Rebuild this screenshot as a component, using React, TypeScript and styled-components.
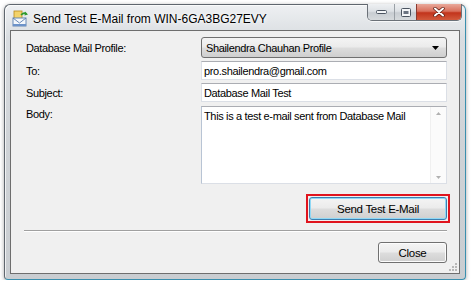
import styled, { createGlobalStyle } from "styled-components";

const GlobalStyle = createGlobalStyle`
  body {
    margin: 0;
    background: #ffffff;
    font-family: "Liberation Sans", Arial, sans-serif;
  }
`;

const Window = styled.div`
  box-sizing: border-box;
  width: 462px;
  height: 276px;
  margin: 4px 0 0 4px;
  display: flex;
  flex-direction: column;
  padding: 0 5px 5px 5px;

  border: 1px solid #5f666e;
  border-right-color: #3a8fae;
  border-bottom-color: #3a8fae;
  border-radius: 6px 6px 4px 4px;
  background: linear-gradient(
    180deg,
    #eef0f2 0%,
    #d9dde1 12%,
    #cfd3d7 50%,
    #c9cdd1 100%
  );
  box-shadow: 0 1px 4px rgba(0, 0, 0, 0.35),
    inset 1px 1px 0 rgba(255, 255, 255, 0.7);
`;

const TitleBar = styled.div`
  height: 25px;
  display: flex;
  flex-direction: row;
  align-items: flex-start;
  flex-shrink: 0;
`;

const TitleIcon = styled.div`
  width: 17px;
  height: 17px;
  margin: 5px 4px 0 2px;
`;

const TitleText = styled.div`
  margin-top: 7px;
  font-size: 12px;
  color: #000;
  text-shadow: 0 0 6px #ffffff, 0 0 3px #ffffff;
  white-space: nowrap;
`;

const Spacer = styled.div`
  flex: 1;
`;

const CaptionButtons = styled.div`
  display: flex;
  flex-direction: row;
  margin-top: -1px;
  margin-right: -2px;
  border: 1px solid #6b7178;
  border-top: none;
  border-radius: 0 0 5px 5px;
  overflow: hidden;
  box-shadow: 0 1px 0 rgba(255, 255, 255, 0.7);
`;

const CaptionButton = styled.div<{ $width: number; $close?: boolean }>`
  width: ${(p) => p.$width}px;
  height: 16px;
  display: flex;
  align-items: center;
  justify-content: center;
  border-left: ${(p) => (p.$close ? "1px solid #8a3a30" : "1px solid #9aa0a6")};
  background: ${(p) =>
    p.$close
      ? "linear-gradient(180deg, #e9a99b 0%, #d9705c 45%, #c2341c 55%, #d25a3c 100%)"
      : "linear-gradient(180deg, #eef0f2 0%, #dde1e5 45%, #c8cdd2 55%, #d6dadd 100%)"};
  &:first-child {
    border-left: none;
  }
`;

const Client = styled.div`
  flex: 1;
  position: relative;
  display: flex;
  flex-direction: column;
  border: 1px solid #6e6e6e;
  background: #f0f0f0;
  padding: 6px 12px 0 15px;
  font-size: 11px;
  letter-spacing: -0.35px;
  color: #000;
`;

const Form = styled.div`
  display: grid;
  grid-template-columns: 175px 1fr;
  row-gap: 3px;
  align-items: center;
`;

const Label = styled.div<{ $top?: boolean }>`
  align-self: ${(p) => (p.$top ? "start" : "center")};
  padding-top: ${(p) => (p.$top ? "3px" : "0")};
`;

const Combo = styled.div`
  box-sizing: border-box;
  height: 21px;
  display: flex;
  align-items: center;
  justify-content: space-between;
  padding: 0 7px 0 4px;
  border: 1px solid #707070;
  border-radius: 3px;
  background: linear-gradient(
    180deg,
    #f4f4f4 0%,
    #ebebeb 48%,
    #dddddd 52%,
    #cfcfcf 100%
  );
`;

const TextBox = styled.div`
  box-sizing: border-box;
  height: 19px;
  display: flex;
  align-items: center;
  padding: 0 2px;
  border: 1px solid #dbdfe6;
  border-top-color: #abadb3;
  background: #ffffff;
`;

const BodyBox = styled.div`
  box-sizing: border-box;
  height: 78px;
  display: flex;
  flex-direction: row;
  margin-top: 1px;
  border: 1px solid #dbdfe6;
  border-top-color: #abadb3;
  border-left-color: #b8c4d4;
  background: #ffffff;
`;

const BodyText = styled.div`
  flex: 1;
  padding: 3px 2px;
`;

const ScrollBar = styled.div`
  width: 15px;
  display: flex;
  flex-direction: column;
  justify-content: space-between;
  align-items: center;
  padding: 5px 0 4px;
  background: #fbfbfb;
  border-left: 1px solid #f0f0f0;
`;

const ButtonRow = styled.div`
  display: flex;
  justify-content: flex-end;
  margin-top: 10px;
  margin-right: -3px;
`;

const Highlight = styled.div`
  border: 2px solid #e0141e;
  padding: 1px;
`;

const Button = styled.div<{ $width: number; $default?: boolean }>`
  box-sizing: border-box;
  width: ${(p) => p.$width}px;
  height: ${(p) => (p.$default ? 23 : 21)}px;
  display: flex;
  align-items: center;
  justify-content: center;
  border: 1px solid ${(p) => (p.$default ? "#3c7fb1" : "#707070")};
  border-radius: 3px;
  background: linear-gradient(
    180deg,
    #f4f4f4 0%,
    #ebebeb 48%,
    #dddddd 52%,
    #cfcfcf 100%
  );
  box-shadow: ${(p) =>
    p.$default ? "inset 0 0 0 1px #8fd8f5" : "inset 0 0 0 1px #fcfcfc"};
  font-size: 11.5px;
  letter-spacing: -0.3px;
`;

const Separator = styled.div`
  height: 1px;
  margin: 7px 0 0 -2px;
  background: #a0a0a0;
  border-bottom: 1px solid #ffffff;
`;

const FooterRow = styled.div`
  display: flex;
  justify-content: flex-end;
  margin-top: 10px;
`;

const Grip = styled.svg`
  position: absolute;
  right: 1px;
  bottom: 1px;
`;

function MailIcon() {
  return (
    <svg width="17" height="17" viewBox="0 0 17 17">
      <rect x="2" y="1" width="8" height="9" fill="#f3d36b" stroke="#b88a1c" strokeWidth="0.8" />
      <rect x="1" y="8" width="13" height="8" fill="#f4f7fb" stroke="#5a7fb0" strokeWidth="0.9" />
      <path d="M1 8 L7.5 13 L14 8" fill="none" stroke="#5a7fb0" strokeWidth="0.9" />
      <rect x="1" y="14" width="13" height="2" fill="#6d93c9" />
      <path d="M9 5 Q12 2 14.5 4" fill="none" stroke="#2f9a2f" strokeWidth="1.6" />
      <path d="M13 1.5 L16 4.5 L12.5 5.5 Z" fill="#2f9a2f" />
    </svg>
  );
}

export default function App() {
  return (
    <>
      <GlobalStyle />
      <Window>
        <TitleBar>
          <TitleIcon>
            <MailIcon />
          </TitleIcon>
          <TitleText>Send Test E-Mail from WIN-6GA3BG27EVY</TitleText>
          <Spacer />
          <CaptionButtons>
            <CaptionButton $width={26}>
              <svg width="11" height="6" viewBox="0 0 11 6">
                <rect x="0.5" y="1.5" width="10" height="3" rx="1" fill="#f4f6f8" stroke="#4b5460" />
              </svg>
            </CaptionButton>
            <CaptionButton $width={21}>
              <svg width="10" height="9" viewBox="0 0 10 9">
                <rect x="0.5" y="0.5" width="9" height="8" rx="1" fill="#f4f6f8" stroke="#4b5460" />
                <rect x="2.5" y="3" width="5" height="3" fill="#6a7380" />
              </svg>
            </CaptionButton>
            <CaptionButton $width={44} $close>
              <svg width="12" height="10" viewBox="0 0 12 10">
                <path d="M2 1.5 L10 8.5 M10 1.5 L2 8.5" stroke="#5a1a10" strokeWidth="3.4" strokeLinecap="round" />
                <path d="M2 1.5 L10 8.5 M10 1.5 L2 8.5" stroke="#ffffff" strokeWidth="2" strokeLinecap="round" />
              </svg>
            </CaptionButton>
          </CaptionButtons>
        </TitleBar>

        <Client>
          <Form>
            <Label>Database Mail Profile:</Label>
            <Combo>
              <span>Shailendra Chauhan Profile</span>
              <svg width="7" height="4" viewBox="0 0 7 4">
                <path d="M0 0 L7 0 L3.5 4 Z" fill="#000" />
              </svg>
            </Combo>

            <Label>To:</Label>
            <TextBox>pro.shailendra@gmail.com</TextBox>

            <Label>Subject:</Label>
            <TextBox>Database Mail Test</TextBox>

            <Label $top>Body:</Label>
            <BodyBox>
              <BodyText>This is a test e-mail sent from Database Mail</BodyText>
              <ScrollBar>
                <svg width="5" height="3" viewBox="0 0 5 3">
                  <path d="M0 3 L5 3 L2.5 0 Z" fill="#b0b0b0" />
                </svg>
                <svg width="5" height="3" viewBox="0 0 5 3">
                  <path d="M0 0 L5 0 L2.5 3 Z" fill="#b0b0b0" />
                </svg>
              </ScrollBar>
            </BodyBox>
          </Form>

          <ButtonRow>
            <Highlight>
              <Button $width={138} $default>
                Send Test E-Mail
              </Button>
            </Highlight>
          </ButtonRow>

          <Separator />

          <FooterRow>
            <Button $width={69}>Close</Button>
          </FooterRow>

          <Grip width="9" height="9" viewBox="0 0 9 9">
            <g fill="#b8b8b8">
              <rect x="6" y="0" width="2" height="2" />
              <rect x="3" y="3" width="2" height="2" />
              <rect x="6" y="3" width="2" height="2" />
              <rect x="0" y="6" width="2" height="2" />
              <rect x="3" y="6" width="2" height="2" />
              <rect x="6" y="6" width="2" height="2" />
            </g>
          </Grip>
        </Client>
      </Window>
    </>
  );
}
